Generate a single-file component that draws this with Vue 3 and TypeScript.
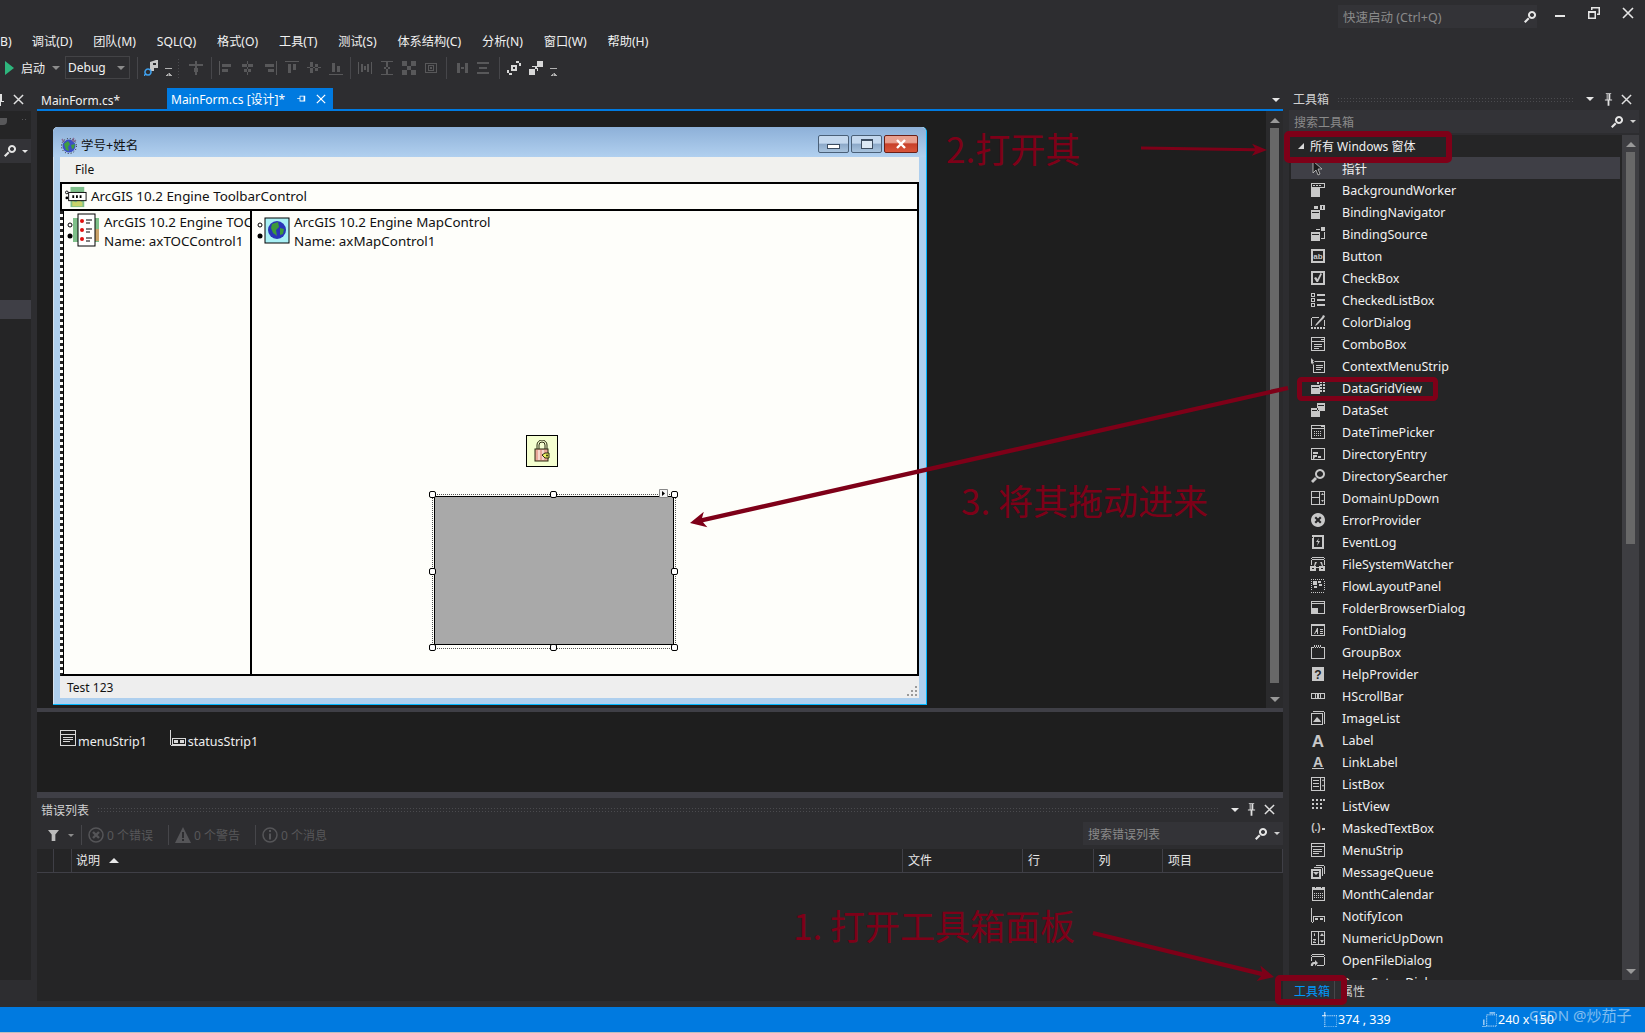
<script setup lang="ts">
// Visual Studio designer view with a Windows Form, toolbox and error list
interface ToolItem {
  name: string;
  d?: string;
  glyph?: string;
  gx?: number;
  gy?: number;
  gs?: number;
}

const r = (x: number, y: number, w: number, h: number): string => `M${x} ${y}h${w}v${h}h${-w}z`;
const frame = (x: number, y: number, w: number, h: number, t = 1): string =>
  r(x, y, w, h) + r(x + t, y + t, w - 2 * t, h - 2 * t);
const cyl = (x: number, y: number): string => r(x, y, 9, 9) + r(x + 1, y + 2, 7, 1);
const dots = (x: number, y: number, cols: number, rows: number, w = 2, h = 2, g = 1): string => {
  let out = "";
  for (let i = 0; i < cols; i++) {
    for (let j = 0; j < rows; j++) out += r(x + i * (w + g), y + j * (h + g), w, h);
  }
  return out;
};

const menuItems = ["调试(D)", "团队(M)", "SQL(Q)", "格式(O)", "工具(T)", "测试(S)", "体系结构(C)", "分析(N)", "窗口(W)", "帮助(H)"];

const alignIcons: string[][] = [
  [
    r(0, 0, 1, 14) + r(3, 3, 9, 3) + r(3, 8, 6, 3),
    r(6, 0, 1, 14) + r(1, 3, 11, 3) + r(3, 8, 7, 3) ,
    r(13, 0, 1, 14) + r(2, 3, 9, 3) + r(5, 8, 6, 3),
    r(0, 0, 14, 1) + r(3, 3, 3, 9) + r(8, 3, 3, 6),
    r(0, 6, 14, 1) + r(3, 1, 3, 11) + r(8, 3, 3, 7),
    r(0, 13, 14, 1) + r(3, 2, 3, 9) + r(8, 5, 3, 6),
  ],
  [
    r(0, 1, 1, 12) + r(13, 1, 1, 12) + r(3, 3, 2, 8) + r(9, 3, 2, 8) + r(6, 5, 2, 4),
    r(1, 0, 12, 1) + r(1, 13, 12, 1) + r(6, 1, 2, 12) + r(4, 6, 6, 2),
    r(0, 0, 5, 5) + r(9, 0, 5, 5) + r(0, 9, 5, 5) + r(9, 9, 5, 5) + r(5, 5, 4, 4),
    frame(1, 2, 12, 10) + frame(4, 4, 6, 6, 1) + r(6, 6, 2, 2),
  ],
  [
    r(1, 2, 3, 10) + r(9, 2, 3, 10) + r(5, 6, 3, 2),
    r(1, 1, 12, 2) + r(1, 11, 12, 2) + r(3, 6, 8, 2),
  ],
  [
    r(0, 9, 2, 5) + r(0, 12, 5, 2) + r(12, 0, 2, 5) + r(9, 0, 5, 2) + frame(4, 4, 6, 6, 2),
    r(0, 8, 6, 6) + r(8, 0, 6, 6) + r(6, 6, 2, 2) + r(3, 5, 5, 1) + r(8, 7, 1, 3),
  ],
];

const tools: ToolItem[] = [
  { name: "BackgroundWorker", d: frame(1, 1, 14, 5) + dots(3, 3, 3, 1, 2, 1, 1) + r(1, 6, 9, 9) },
  { name: "BindingNavigator", d: cyl(1, 6) + r(4, 2, 4, 3) + r(10, 1, 5, 5) + r(12, 2, 1, 3) },
  { name: "BindingSource", d: cyl(1, 6) + r(11, 1, 4, 4) + r(6, 3, 4, 1) + r(14, 6, 1, 7) + r(11, 12, 3, 1) },
  { name: "Button", d: frame(1, 1, 14, 14, 2), glyph: "ab", gx: 8, gy: 11, gs: 8 },
  { name: "CheckBox", d: frame(1, 1, 14, 14, 2) + "M4 8l2-1 1.5 2 3-6 1.5 1-4 8h-1.5z" },
  { name: "CheckedListBox", d: frame(1, 1, 4, 4) + frame(1, 6, 4, 4) + frame(1, 11, 4, 4) + r(7, 2, 8, 2) + r(7, 7, 8, 2) + r(7, 12, 8, 2) },
  { name: "ColorDialog", d: r(1, 3, 8, 1) + r(1, 3, 1, 9) + r(14, 6, 1, 6) + dots(1, 13, 5, 1, 2, 2, 1) + "M6 10l6-7 1-2 2 1-1 2-7 7-2 1z" },
  { name: "ComboBox", d: frame(1, 1, 14, 14) + r(2, 5, 12, 1) + r(4, 8, 8, 1) + r(4, 10, 8, 1) + r(4, 12, 5, 1) + r(11, 3, 3, 1) },
  { name: "ContextMenuStrip", d: frame(3, 3, 12, 12) + r(6, 7, 7, 1) + r(6, 9, 7, 1) + r(6, 11, 5, 1) + "M1 0l4 4h-2l1 2-1 1-1-2-1 1z" },
  { name: "DataGridView", d: cyl(1, 5) + dots(10, 1, 2, 4, 2, 2, 1) + r(7, 1, 2, 3) },
  { name: "DataSet", d: cyl(1, 6) + r(7, 1, 8, 8) + r(8, 3, 6, 1) + r(8, 6, 2, 3) },
  { name: "DateTimePicker", d: frame(1, 1, 14, 14) + r(2, 4, 12, 1) + r(11, 2, 3, 1) + dots(4, 7, 4, 3, 1, 1, 1) },
  { name: "DirectoryEntry", d: frame(1, 2, 14, 12) + r(3, 6, 5, 2) + "M3 9h4v2h-2l-1 2h-1z" + r(8, 10, 3, 2) },
  { name: "DirectorySearcher", d: "M10 1a5 5 0 1 1-.01 0zM10 3a3 3 0 1 0 .01 0z" + "M5 9l2 2-4 4-2-2z" },
  { name: "DomainUpDown", d: frame(1, 1, 14, 14) + r(2, 7, 7, 1) + r(9, 2, 1, 12) + "M11 5l1.5-2 1.5 2zM11 10h3l-1.5 2z" },
  { name: "ErrorProvider", d: "M8 1a7 7 0 1 1-.01 0z" + "M4.5 6l1.5-1.5 2 2 2-2 1.500 1.500-2 2 2 2-1.500 1.500-2-2-2 2-1.500-1.500 2-2z" },
  { name: "EventLog", d: frame(2, 1, 12, 14, 2) + r(2, 3, 1, 1) + "M9 4l-3 4h2l-1 4 3-5h-2z" },
  { name: "FileSystemWatcher", d: r(1, 1, 14, 1) + r(1, 1, 1, 8) + r(14, 1, 1, 8) + r(1, 3, 14, 1) + "M5 6h2l-2 4h-1zM10 6h2l1 4h-1z" + frame(0, 10, 6, 5, 2) + frame(9, 10, 6, 5, 2) + r(6, 11, 3, 1) },
  { name: "FlowLayoutPanel", d: dots(1, 1, 7, 1, 1, 1, 1) + dots(1, 14, 7, 1, 1, 1, 1) + dots(1, 3, 1, 5, 1, 1, 1) + dots(14, 3, 1, 5, 1, 1, 1) + r(3, 3, 4, 4) + r(8, 3, 3, 2) + r(4, 8, 3, 2) + r(9, 6, 3, 2) },
  { name: "FolderBrowserDialog", d: frame(1, 1, 14, 13) + r(2, 8, 6, 5) + r(2, 3, 12, 1) },
  { name: "FontDialog", d: frame(1, 2, 14, 12) + r(2, 3, 12, 1) + "M4 12l3-6h1v6h-1v-2h-1l-1 2z" + r(10, 7, 3, 1) + r(10, 9, 3, 1) + r(10, 11, 3, 1) },
  { name: "GroupBox", d: frame(1, 3, 14, 12) + r(4, 1, 1, 3) + r(6, 1, 1, 3) + r(8, 1, 1, 3) + r(10, 1, 1, 3) },
  { name: "HelpProvider", d: r(2, 1, 12, 14), glyph: "?", gx: 8, gy: 12.5, gs: 12 },
  { name: "HScrollBar", d: r(1, 5, 14, 6) + r(2, 6, 3, 4) + r(6, 6, 4, 4) + r(11, 6, 3, 4) + r(7, 6, 2, 4) },
  { name: "ImageList", d: frame(1, 3, 12, 12) + r(14, 1, 1, 13) + r(3, 1, 12, 1) + "M3 12l4-5 3 3 1 2z" },
  { name: "Label", glyph: "A", gx: 8, gy: 15, gs: 17 },
  { name: "LinkLabel", d: r(2, 14, 12, 1), glyph: "A", gx: 8, gy: 13, gs: 14 },
  { name: "ListBox", d: frame(1, 1, 14, 14) + r(3, 4, 6, 1) + r(3, 7, 6, 1) + r(3, 10, 6, 1) + r(10, 2, 1, 12) + "M12 5l1-2 1 2zM12 9h2l-1 2z" },
  { name: "ListView", d: dots(2, 1, 3, 3, 2, 2, 2) + r(13, 1, 2, 2) },
  { name: "MaskedTextBox", d: r(12, 8, 3, 2), glyph: "(.)", gx: 6, gy: 11, gs: 10 },
  { name: "MenuStrip", d: frame(1, 1, 14, 14) + r(2, 4, 12, 1) + r(3, 7, 9, 1) + r(3, 9, 9, 1) + r(3, 11, 6, 1) },
  { name: "MessageQueue", d: frame(1, 5, 10, 10, 2) + "M3 8h6l-3 3z" + r(4, 3, 9, 1) + r(12, 3, 1, 9) + r(6, 1, 9, 1) + r(14, 1, 1, 9) },
  { name: "MonthCalendar", d: frame(2, 1, 13, 14) + r(3, 2, 11, 2) + r(5, 1, 1, 1) + r(11, 1, 1, 1) + dots(4, 7, 5, 3, 1, 1, 1) },
  { name: "NotifyIcon", d: r(1, 0, 1, 15) + r(1, 14, 14, 1) + frame(3, 8, 12, 7, 1) + r(5, 10, 3, 2) + r(10, 10, 3, 2) },
  { name: "NumericUpDown", d: frame(1, 1, 14, 14) + r(8, 2, 1, 12) + "M5 3v3h-1v-2l-1 .500zM3 9h3v1l-2 2h2v1h-3v-1l2-2h-2z" + "M10 6l2-3 2 3zM10 10h4l-2 3z" },
  { name: "OpenFileDialog", d: r(1, 2, 14, 1) + r(1, 4, 14, 1) + r(14, 2, 1, 12) + r(7, 13, 8, 1) + r(1, 2, 1, 7) + "M1 14a3 3 0 0 1 3-4h1v-2l3 3-3 3v-2h-1a2 2 0 0 0-1 2z" },
  { name: "PageSetupDialog", d: frame(2, 1, 12, 14) },
];

const arrow = (x1: number, y1: number, x2: number, y2: number, t: number, len: number, wid: number): string => {
  const dist = Math.hypot(x2 - x1, y2 - y1);
  const ux = (x2 - x1) / dist;
  const uy = (y2 - y1) / dist;
  const nx = -uy;
  const ny = ux;
  const pt = (a: number, b: number): string => `${(x2 + ux * a + nx * b).toFixed(1)} ${(y2 + uy * a + ny * b).toFixed(1)}`;
  return `M${(x1 + nx * t).toFixed(1)} ${(y1 + ny * t).toFixed(1)}L${pt(-len * 0.8, t)}L${pt(-len, wid)}L${pt(0, 0)}L${pt(-len, -wid)}L${pt(-len * 0.8, -t)}L${(x1 - nx * t).toFixed(1)} ${(y1 - ny * t).toFixed(1)}z`;
};

const arrows = [
  arrow(1141, 148, 1267, 150, 1.5, 15, 6),
  arrow(1288, 388, 690, 523, 2.2, 16, 8),
  arrow(1093, 933, 1274, 977, 2.2, 16, 8),
];

const handles: number[][] = [];
for (const y of [0, 50, 100]) {
  for (const x of [0, 50, 100]) {
    if (!(x === 50 && y === 50)) handles.push([x, y]);
  }
}

const columns = [
  { label: "文件", w: 120 },
  { label: "行", w: 70.5 },
  { label: "列", w: 69.5 },
  { label: "项目", w: 120 },
];
</script>

<template>
  <div class="ide">
    <header class="chrome">
      <div class="title-row">
        <div class="quick">
          <span>快速启动 (Ctrl+Q)</span>
          <svg class="mag" viewBox="0 0 14 14"><path d="M9 1a4 4 0 1 1-.01 0zM9 3a2 2 0 1 0 .01 0zM5 7.500l1.500 1.500-4 4-1.500-1.500z" fill-rule="evenodd" /></svg>
        </div>
        <div class="win-btns">
          <svg viewBox="0 0 14 14"><path d="M2 9h10v2h-10z" /></svg>
          <svg viewBox="0 0 14 14"><path d="M1 5h8v8h-8zM2.500 7v4.500h5v-4.500zM4 1h9v8h-3v-1.500h1.500v-5h-6v1.500h-1.500z" fill-rule="evenodd" /></svg>
          <svg viewBox="0 0 14 14"><path d="M2 2l10 10M12 2l-10 10" stroke="#e6e6e6" stroke-width="1.600" /></svg>
        </div>
      </div>
      <nav class="menu">
        <span class="menu-cut">B)</span>
        <span v-for="m in menuItems" :key="m">{{ m }}</span>
      </nav>
      <div class="toolbar">
        <svg class="play" viewBox="0 0 9 14"><path d="M0 0l9 7-9 7z" /></svg>
        <span class="start">启动</span>
        <i class="caret start-caret"></i>
        <div class="combo">Debug<i class="caret"></i></div>
        <i class="sep sep-a"></i>
        <svg class="conn" viewBox="0 0 14 16">
          <path d="M6 2l6-2h2v8h-4v3h-4z" fill="#c8c8c8" />
          <path d="M9 3h3v2h-3z" fill="#2d2d30" />
          <path d="M4 9a3 3 0 1 1-.01 0zM2 13l-2 3" fill="none" stroke="#3fa2f0" stroke-width="1.500" />
        </svg>
        <i class="overflow"></i>
        <i class="dots"></i>
        <svg class="ticon solo" viewBox="0 0 14 14"><path :d="r(0, 3, 14, 2) + r(6, 0, 2, 14) + r(5, 7, 4, 4)" /></svg>
        <template v-for="(group, i) in alignIcons" :key="i">
          <i class="sep" :class="'sep-' + i"></i>
          <div class="tgroup" :class="'tgroup-' + i">
            <svg v-for="d in group" :key="d" class="ticon" viewBox="0 0 14 14"><path :d="d" fill-rule="evenodd" /></svg>
          </div>
        </template>
        <i class="overflow last"></i>
      </div>
    </header>

    <div class="body">
      <aside class="left">
        <div class="left-head">
          <svg class="left-pin" viewBox="0 0 6 14"><path d="M0 1h4v7h2v1h-3v4h-1v-4h-2z" /></svg>
          <svg class="left-x" viewBox="0 0 12 12"><path d="M1 1l10 10M11 1l-10 10" stroke="#e0e0e0" stroke-width="1.600" /></svg>
        </div>
        <div class="left-pane">
          <div class="left-tools"><i></i><b></b></div>
          <div class="left-search">
            <svg class="mag" viewBox="0 0 14 14"><path d="M9 1a4 4 0 1 1-.01 0zM9 3a2 2 0 1 0 .01 0zM5 7.500l1.500 1.500-4 4-1.500-1.500z" fill-rule="evenodd" /></svg>
            <i class="caret small"></i>
          </div>
          <div class="left-sel"></div>
        </div>
      </aside>

      <main class="center">
        <div class="tabs">
          <div class="tab">MainForm.cs*</div>
          <div class="tab active">
            <span>MainForm.cs [设计]*</span>
            <svg class="tab-pin" viewBox="0 0 12 10"><path d="M0 4h3v-3h7v7h-7v-3h-3zM4 2v5h4v-5z" fill-rule="evenodd" /></svg>
            <svg class="tab-x" viewBox="0 0 12 12"><path d="M1 1l10 10M11 1l-10 10" stroke="#fff" stroke-width="1.500" /></svg>
          </div>
          <i class="caret well-caret"></i>
        </div>

        <section class="designer">
          <div class="canvas">
            <div class="form">
              <div class="form-title">
                <svg class="form-ico" viewBox="0 0 18 18">
                  <circle cx="9" cy="10" r="6.500" fill="#3c4fc4" />
                  <path d="M4 8l4-3 2 3-2 3 1 4-3-1zM11 9l4-1-1 4-2 1z" fill="#3f9e3f" />
                  <path d="M2 3l2 3M14 2l-2 3M16 4l-3 2" stroke="#8a6d9a" stroke-width="1.500" />
                  <circle cx="9" cy="10" r="7.500" fill="none" stroke="#222" stroke-dasharray="1 2" />
                </svg>
                <span>学号+姓名</span>
                <div class="form-btns">
                  <div class="fb"><i class="fb-min"></i></div>
                  <div class="fb"><i class="fb-max"></i></div>
                  <div class="fb fb-close">
                    <svg viewBox="0 0 12 10"><path d="M2 1l8 8M10 1l-8 8" stroke="#fff" stroke-width="2.400" /></svg>
                  </div>
                </div>
              </div>
              <div class="client">
                <div class="form-menu">File</div>
                <div class="ctl-toolbar">
                  <svg class="ax-ico" viewBox="0 0 24 24">
                    <rect x="6" y="1" width="15" height="22" fill="#7fc08a" />
                    <path d="M8 16l4 2 3-3 4 3v4h-11z" fill="#c9d36a" />
                    <rect x="4" y="7" width="19" height="9" fill="#fff" stroke="#000" />
                    <path d="M8 10h2v3h-2zM12 10h2v3h-2zM16 10h2v3h-2z" fill="#000" />
                    <circle cx="2" cy="7" r="1.500" fill="#fff" stroke="#000" />
                    <circle cx="2" cy="13" r="1.500" fill="#000" />
                  </svg>
                  <span>ArcGIS 10.2 Engine ToolbarControl</span>
                </div>
                <div class="surface">
                  <div class="toc">
                    <svg class="ax-ico big" viewBox="0 0 34 34">
                      <rect x="7" y="5" width="26" height="24" fill="#7fc08a" />
                      <path d="M22 16h11v12h-11z" fill="#c9a26a" />
                      <rect x="12" y="1" width="17" height="32" fill="#fff" stroke="#000" />
                      <circle cx="16" cy="8" r="2" fill="#e01010" />
                      <circle cx="16" cy="17" r="2" fill="#e01010" />
                      <circle cx="16" cy="26" r="2" fill="#e01010" />
                      <path d="M20 7h6M20 10h4M20 16h6M20 19h4M20 25h6M20 28h4" stroke="#000" />
                      <circle cx="4" cy="12" r="2" fill="#fff" stroke="#000" />
                      <circle cx="4" cy="23" r="2.500" fill="#000" />
                    </svg>
                    <div class="ctl-text">
                      <div>ArcGIS 10.2 Engine TOCControl</div>
                      <div>Name: axTOCControl1</div>
                    </div>
                  </div>
                  <div class="map">
                    <svg class="ax-ico big" viewBox="0 0 34 34">
                      <rect x="9" y="5" width="24" height="25" fill="#a9f0f5" stroke="#000" />
                      <circle cx="21" cy="17" r="9" fill="#2a35b8" />
                      <path d="M16 11l6-2 1 5-3 3 1 6-4-3-2-5zM24 15l4 1-1 5-3 1z" fill="#3d9a3a" />
                      <circle cx="4" cy="12" r="2" fill="#fff" stroke="#000" />
                      <circle cx="4" cy="23" r="2.500" fill="#000" />
                    </svg>
                    <div class="ctl-text">
                      <div>ArcGIS 10.2 Engine MapControl</div>
                      <div>Name: axMapControl1</div>
                    </div>
                  </div>
                  <div class="lock">
                    <svg viewBox="0 0 16 22">
                      <path d="M3 9v-4a5 5 0 0 1 10 0v4M5 9v-4a3 3 0 0 1 6 0v4" fill="none" stroke="#2b2b10" />
                      <rect x="1" y="9" width="13" height="12" fill="#e8a89a" stroke="#2b2b10" />
                      <path d="M4 10h2v10h-2zM8 10h2v10h-2z" fill="#f6d6cc" />
                      <path d="M8 15l3-2h4v5h-4z" fill="#e9ee60" stroke="#2b2b10" />
                      <circle cx="13" cy="15.500" r="1" fill="#2b2b10" />
                    </svg>
                  </div>
                  <div class="dgv">
                    <div class="dgv-fill"></div>
                    <i v-for="h in handles" :key="h.join()" class="handle" :style="{ left: h[0] + '%', top: h[1] + '%' }"></i>
                    <svg class="smart" viewBox="0 0 9 9"><path d="M.5.5h8v8h-8z" fill="#f4f4f4" stroke="#888" /><path d="M3 2l3 2.500-3 2.500z" fill="#000" /></svg>
                  </div>
                </div>
                <div class="form-status">
                  <span>Test 123</span>
                  <svg class="grip" viewBox="0 0 10 10"><path d="M8 0h2v2h-2zM4 4h2v2h-2zM8 4h2v2h-2zM0 8h2v2h-2zM4 8h2v2h-2zM8 8h2v2h-2z" fill="#9a9a9a" /></svg>
                </div>
              </div>
            </div>
          </div>
          <div class="vscroll">
            <i class="arr up"></i>
            <div class="thumb"></div>
            <i class="arr down"></i>
          </div>
        </section>

        <div class="splitter"></div>

        <section class="tray">
          <div class="tray-item">
            <svg viewBox="0 0 16 16"><path :d="frame(0, 0, 16, 16) + r(1, 4, 14, 1) + r(3, 7, 10, 1) + r(3, 9, 10, 1) + r(3, 11, 7, 1)" fill-rule="evenodd" /></svg>
            <span>menuStrip1</span>
          </div>
          <div class="tray-item">
            <svg viewBox="0 0 16 16"><path :d="r(0, 0, 1, 16) + r(0, 15, 16, 1) + frame(2, 8, 14, 7) + r(4, 10, 4, 3) + r(10, 10, 4, 3)" fill-rule="evenodd" /></svg>
            <span>statusStrip1</span>
          </div>
        </section>

        <div class="splitter wide"></div>

        <section class="errors">
          <div class="panel-head">
            <span>错误列表</span>
            <i class="gripper"></i>
            <i class="caret"></i>
            <svg class="pin" viewBox="0 0 10 14"><path d="M2 0h6v1h-1v6h2v1h-3v6h-2v-6h-3v-1h2v-6h-1zM4 1v6h1v-6z" fill-rule="evenodd" /></svg>
            <svg class="close" viewBox="0 0 12 12"><path d="M1 1l10 10M11 1l-10 10" stroke="#e0e0e0" stroke-width="1.600" /></svg>
          </div>
          <div class="err-tools">
            <svg class="funnel" viewBox="0 0 12 12"><path d="M0 0h12l-4 5v7h-4v-7z" /></svg>
            <i class="caret small"></i>
            <i class="ebar"></i>
            <div class="ebtn">
              <svg viewBox="0 0 16 16"><circle cx="8" cy="8" r="7" fill="none" stroke="#555558" stroke-width="1.500" /><path d="M5 5l6 6M11 5l-6 6" stroke="#555558" stroke-width="2.400" /></svg>
              <span>0 个错误</span>
            </div>
            <i class="ebar"></i>
            <div class="ebtn">
              <svg viewBox="0 0 16 16"><path d="M8 0l8 16h-16zM7 5v6h2v-6zM7 12v2h2v-2z" fill="#555558" fill-rule="evenodd" /></svg>
              <span>0 个警告</span>
            </div>
            <i class="ebar"></i>
            <div class="ebtn">
              <svg viewBox="0 0 16 16"><circle cx="8" cy="8" r="7" fill="none" stroke="#555558" stroke-width="1.500" /><path d="M7 3h2v2h-2zM7 6.500h2v6h-2z" fill="#555558" /></svg>
              <span>0 个消息</span>
            </div>
            <div class="err-search">
              <span>搜索错误列表</span>
              <svg class="mag" viewBox="0 0 14 14"><path d="M9 1a4 4 0 1 1-.01 0zM9 3a2 2 0 1 0 .01 0zM5 7.500l1.500 1.500-4 4-1.500-1.500z" fill-rule="evenodd" /></svg>
              <i class="caret small"></i>
            </div>
          </div>
          <div class="grid-head">
            <div class="gh gh-a"></div>
            <div class="gh gh-b"></div>
            <div class="gh gh-desc">说明<i class="sort"></i></div>
            <div v-for="c in columns" :key="c.label" class="gh" :style="{ width: c.w + 'px' }">{{ c.label }}</div>
          </div>
          <div class="grid-body"></div>
        </section>
      </main>

      <aside class="toolbox">
        <div class="panel-head tb-head">
          <span>工具箱</span>
          <i class="gripper"></i>
          <i class="caret"></i>
          <svg class="pin" viewBox="0 0 10 14"><path d="M2 0h6v1h-1v6h2v1h-3v6h-2v-6h-3v-1h2v-6h-1zM4 1v6h1v-6z" fill-rule="evenodd" /></svg>
          <svg class="close" viewBox="0 0 12 12"><path d="M1 1l10 10M11 1l-10 10" stroke="#e0e0e0" stroke-width="1.600" /></svg>
        </div>
        <div class="tb-search">
          <span>搜索工具箱</span>
          <svg class="mag" viewBox="0 0 14 14"><path d="M9 1a4 4 0 1 1-.01 0zM9 3a2 2 0 1 0 .01 0zM5 7.500l1.500 1.500-4 4-1.500-1.500z" fill-rule="evenodd" /></svg>
          <i class="caret small"></i>
        </div>
        <div class="tb-list">
          <div class="tb-rows">
            <div class="tb-group"><i class="tri"></i>所有 Windows 窗体</div>
            <div class="tb-row selected">
              <svg class="tool" viewBox="0 0 16 16"><path d="M3 1l9 8h-4l2 5-2 1-2-5-3 3z" fill="#1b1b1c" stroke="#c8c8c8" stroke-width=".8" /></svg>
              <span>指针</span>
            </div>
            <div v-for="t in tools" :key="t.name" class="tb-row">
              <svg class="tool" viewBox="0 0 16 16">
                <path v-if="t.d" :d="t.d" fill-rule="evenodd" />
                <text v-if="t.glyph" :x="t.gx" :y="t.gy" :font-size="t.gs" :class="{ onfill: t.name === 'HelpProvider' }">{{ t.glyph }}</text>
              </svg>
              <span>{{ t.name }}</span>
            </div>
          </div>
          <div class="vscroll tb-scroll">
            <i class="arr up"></i>
            <div class="thumb"></div>
            <i class="arr down"></i>
          </div>
        </div>
        <div class="tb-tabs">
          <span class="on">工具箱</span>
          <i></i>
          <span>属性</span>
        </div>
      </aside>
    </div>

    <footer class="status">
      <div class="st-pos">
        <svg viewBox="0 0 16 16"><path d="M3 4h13v12h-13z" fill="none" stroke="#fff" stroke-dasharray="1 1" /><path d="M0 4h4M3 0v4" stroke="#fff" /></svg>
        <span>374 , 339</span>
      </div>
      <div class="st-size">
        <svg viewBox="0 0 16 16"><path d="M5 3h11v12h-11z" fill="none" stroke="#fff" stroke-dasharray="1 1" /><path d="M0 16h5M2 8v6M8 1h6" stroke="#fff" /></svg>
        <span>240 x 150</span>
      </div>
    </footer>

    <svg class="notes" viewBox="0 0 1645 1033">
      <rect x="1287" y="134" width="162" height="26" rx="2" class="note-box" stroke-width="6" />
      <rect x="1299.500" y="379.500" width="136" height="19" rx="2" class="note-box" stroke-width="5" />
      <rect x="1278" y="978" width="66" height="24" rx="2" class="note-box" stroke-width="6" />
      <path v-for="d in arrows" :key="d" :d="d" class="note-fill" />
      <text x="946" y="163" class="note-text">2.打开其</text>
      <text x="961" y="515" class="note-text">3. 将其拖动进来</text>
      <text x="793" y="940" class="note-text">1. 打开工具箱面板</text>
      <text x="1529" y="1021" class="mark">CSDN @炒茄子</text>
    </svg>
  </div>
</template>

<style scoped>
.ide {
  position: relative;
  width: 1645px;
  height: 1033px;
  overflow: hidden;
  display: flex;
  flex-direction: column;
  background: #2d2d30;
  color: #f1f1f1;
  font-family: "Noto Sans", "Noto Sans CJK SC", sans-serif;
  font-size: 12px;
}
i { display: block; font-style: normal; }

.caret {
  width: 0;
  height: 0;
  border-left: 4px solid transparent;
  border-right: 4px solid transparent;
  border-top: 4px solid #e6e6e6;
}
.caret.small { border-left-width: 3px; border-right-width: 3px; border-top-width: 3px; }
.mag { width: 14px; height: 14px; fill: #e6e6e6; flex: none; }
.gripper {
  flex: 1;
  height: 5px;
  background-image: radial-gradient(#4a4a4e 0.8px, transparent 0.9px);
  background-size: 3px 3px;
}

/* top chrome */
.chrome { height: 88px; flex: none; }
.title-row { height: 29px; display: flex; justify-content: flex-end; align-items: flex-start; }
.quick {
  width: 199px;
  height: 23px;
  margin-top: 5px;
  background: #333337;
  color: #8a8a8a;
  display: flex;
  align-items: center;
  justify-content: space-between;
  padding: 0 0 0 5px;
  box-sizing: border-box;
  font-size: 12.500px;
}
.win-btns { display: flex; gap: 20px; padding: 6px 10px 0 16px; }
.win-btns svg { width: 14px; height: 14px; fill: #e6e6e6; }
.menu { height: 24px; display: flex; align-items: center; gap: 20.800px; font-size: 12.200px; }
.menu-cut { width: 11px; margin-right: 0; }
.toolbar { height: 29px; display: flex; align-items: center; position: relative; }
.play { width: 9px; height: 14px; fill: #2eb67d; margin-left: 5px; }
.start { margin-left: 7px; font-size: 12px; width: 26px; }
.start-caret { margin-left: 5px; border-top-color: #8c8c8c; }
.combo {
  width: 65px;
  height: 23px;
  box-sizing: border-box;
  margin-left: 5px;
  border: 1px solid #434346;
  background: #2d2d30;
  padding-left: 2px;
  display: flex;
  align-items: center;
  justify-content: space-between;
  padding-right: 4px;
}
.combo .caret { border-top-color: #8c8c8c; }
.sep { width: 1px; height: 22px; background: #46464a; }
.sep-a { margin-left: 7px; }
.conn { width: 14px; height: 16px; margin-left: 6px; }
.overflow {
  width: 7px;
  height: 7px;
  margin: 9px 0 0 7px;
  border-top: 1px solid #b0b0b0;
  background: linear-gradient(135deg, transparent 48%, #b0b0b0 50%) 0 2px / 50% 100% no-repeat,
    linear-gradient(225deg, transparent 48%, #b0b0b0 50%) 100% 2px / 50% 100% no-repeat;
}
.overflow.last { margin-left: 7px; }
.dots {
  width: 4px;
  height: 20px;
  margin-left: 5px;
  background-image: radial-gradient(#4a4a4e 0.8px, transparent 0.9px);
  background-size: 3px 3px;
}
.ticon { width: 14px; height: 14px; fill: #58585a; flex: none; }
.solo { margin: 0 8px 0 8px; }
.tgroup { display: flex; gap: 8px; margin: 0 7px 0 7px; }
.tgroup-1 { margin-right: 8px; }
.tgroup-2 { gap: 6px; margin-left: 9px; margin-right: 9px; }
.tgroup-3 { margin-left: 7px; margin-right: 0; }
.tgroup-3 .ticon { fill: #d8d8d8; }

/* layout */
.body { flex: 1; display: flex; min-height: 0; }
.left { width: 37px; flex: none; display: flex; flex-direction: column; }
.left-head { height: 23px; position: relative; display: flex; align-items: center; gap: 7px; }
.left-pin { width: 6px; height: 14px; fill: #e0e0e0; margin-left: -2px; }
.left-x { width: 11px; height: 11px; margin-left: 2px; }
.left-pane { width: 31px; height: 869px; background: #252526; }
.left-tools { height: 27px; display: flex; justify-content: space-between; padding: 7px 4px 0 0; box-sizing: border-box; }
.left-tools i { width: 7px; height: 7px; border-radius: 0 0 4px 0; background: #58585a; }
.left-tools b { width: 6px; height: 4px; background-image: radial-gradient(#58585a 1px, transparent 1px); background-size: 3px 3px; }
.left-search { height: 24px; background: #333337; margin-top: 1px; display: flex; align-items: center; gap: 5px; padding-left: 3px; }
.left-sel { height: 19px; background: #3f3f46; margin-top: 137px; }

.center { width: 1246px; flex: none; display: flex; flex-direction: column; }
.tabs { height: 21px; flex: none; display: flex; border-bottom: 2px solid #007ae0; position: relative; align-items: stretch; }
.tab { width: 130px; padding-left: 4px; line-height: 25px; box-sizing: border-box; font-size: 12px; }
.tab.active {
  width: 166px;
  background: #007ae0;
  color: #fff;
  display: flex;
  align-items: center;
  padding-left: 4px;
}
.tab.active span { width: 125px; flex: none; margin-top: 2px; line-height: 20px; }
.tab-pin { width: 10px; height: 8px; fill: #fff; margin-left: 1px; }
.tab-x { width: 10px; height: 10px; margin-left: 9px; }
.well-caret { position: absolute; right: 3px; top: 10px; }

.designer { height: 597px; flex: none; display: flex; background: #1e1e1e; }
.canvas { flex: 1; padding: 16px 0 0 16px; }
.vscroll { width: 17px; background: #3e3e42; flex: none; display: flex; flex-direction: column; align-items: center; position: relative; }
.designer .vscroll { background: #2a2a2c; }
.thumb { width: 9px; background: #686868; }
.designer .thumb { height: 555px; margin-top: 17px; }
.arr { width: 0; height: 0; border-left: 5px solid transparent; border-right: 5px solid transparent; position: absolute; left: 3.500px; }
.arr.up { border-bottom: 5px solid #999; top: 7px; }
.arr.down { border-top: 5px solid #999; bottom: 6px; }

/* the form */
.form {
  width: 874px;
  height: 578px;
  box-sizing: border-box;
  background: #aecfee;
  border-right: 1px solid #00b7ff;
  border-bottom: 1px solid #00b7ff;
  border-radius: 5px 5px 0 0;
  box-shadow: inset 0 1px 0 #e8f0f8, inset 1px 0 0 #d6e2ee;
  font-family: "Noto Sans", "Noto Sans CJK SC", sans-serif;
  color: #111;
  display: flex;
  flex-direction: column;
  padding: 0 7px 6px 7px;
}
.form-title {
  height: 30px;
  flex: none;
  margin: 0 -7px;
  padding: 0 8px 0 7px;
  background: linear-gradient(#8db0d8, #b1d0ef);
  display: flex;
  align-items: center;
  gap: 3px;
  border-radius: 5px 5px 0 0;
  font-size: 12.500px;
}
.form-title > span { margin-top: 4px; }
.form-ico { width: 18px; height: 18px; margin-top: 5px; }
.form-btns { margin-left: auto; display: flex; gap: 2px; align-items: flex-start; height: 30px; padding-top: 8px; box-sizing: border-box; }
.fb {
  width: 31px;
  height: 18px;
  box-sizing: border-box;
  border: 1px solid #4a6078;
  border-radius: 2px;
  background: linear-gradient(#c4d8ee 45%, #8ba8c8 50%, #a9c4de);
  display: flex;
  align-items: center;
  justify-content: center;
}
.fb-close { width: 34px; background: linear-gradient(#e8a090 40%, #c8402a 50%, #d8553a); border-color: #6a2018; }
.fb-close svg { width: 12px; height: 10px; }
.fb-min { width: 11px; height: 3px; margin-top: 5px; background: #fff; border: 1px solid #3c4c60; }
.fb-max { width: 10px; height: 7px; border: 1px solid #3c4c60; border-top-width: 2px; background: #dce8f4; }
.client { flex: 1; display: flex; flex-direction: column; min-height: 0; }
.form-menu { height: 25px; flex: none; background: #f1f1ee; padding-left: 15px; line-height: 25px; font-size: 12px; }
.ctl-toolbar {
  height: 29px;
  flex: none;
  box-sizing: border-box;
  border: 2px solid #000;
  background: #fefefa;
  display: flex;
  align-items: center;
  padding: 0 0 0 3px;
  gap: 4px;
  font-size: 13.400px;
}
.ctl-toolbar span { margin-top: -2px; }
.ax-ico { width: 22px; height: 22px; flex: none; }
.ax-ico.big { width: 34px; height: 34px; }
.surface {
  flex: 1;
  display: flex;
  position: relative;
  box-sizing: border-box;
  background: #fefefa;
  border-bottom: 2px solid #000;
  border-right: 2px solid #000;
  border-left: 3px dotted #222;
}
.toc { width: 189px; flex: none; overflow: hidden; border-left: 1px solid #000; border-right: 2px solid #000; display: flex; padding: 2px 0 0 2px; gap: 4px; white-space: nowrap; box-sizing: border-box; }
.map { flex: 1; display: flex; padding: 2px 0 0 4px; gap: 4px; white-space: nowrap; }
.ctl-text { font-size: 13.400px; line-height: 19px; }
.lock {
  position: absolute;
  left: 463px;
  top: 224px;
  width: 32px;
  height: 32px;
  box-sizing: border-box;
  border: 1px solid #000;
  background: #f5ffd0;
  display: flex;
  align-items: center;
  justify-content: center;
}
.lock svg { width: 16px; height: 22px; }
.dgv {
  position: absolute;
  left: 369px;
  top: 283px;
  width: 244px;
  height: 155px;
  box-sizing: border-box;
  border: 1px dotted #555;
}
.dgv-fill {
  position: absolute;
  left: 1px;
  right: 1px;
  top: 1px;
  bottom: 3px;
  background: #a9a9a9;
  border: 1px solid #000;
}
.handle {
  position: absolute;
  width: 7px;
  height: 7px;
  box-sizing: border-box;
  margin: -4px 0 0 -4px;
  border: 1px solid #000;
  border-radius: 2px;
  background: #fff;
}
.smart {
  position: absolute;
  right: 7px;
  top: -6px;
  width: 9px;
  height: 9px;
}
.form-status {
  height: 22px;
  flex: none;
  background: #eeeeee;
  display: flex;
  align-items: center;
  justify-content: space-between;
  padding: 0 2px 0 7px;
}
.grip { width: 10px; height: 10px; margin-top: 8px; }

.splitter { height: 4px; flex: none; background: #3f3f46; }
.splitter.wide { height: 6px; }
.tray { height: 80px; flex: none; background: #1e1e1e; display: flex; gap: 23px; padding: 18px 0 0 23px; box-sizing: border-box; }
.tray-item { display: flex; gap: 2px; height: 24px; font-size: 12.500px; color: #eee; }
.tray-item svg { width: 16px; height: 16px; fill: #d8d8d8; }
.tray-item span { margin-top: 4px; line-height: 16px; }

/* error list */
.errors { flex: 1; display: flex; flex-direction: column; padding-bottom: 6px; box-sizing: border-box; }
.panel-head { height: 23px; flex: none; display: flex; align-items: center; color: #d0d0d0; padding-left: 4px; gap: 8px; }
.panel-head .caret { margin-left: 3px; }
.pin { width: 9px; height: 13px; fill: #e0e0e0; }
.close { width: 11px; height: 11px; margin-right: 8px; }
.err-tools { height: 28px; flex: none; display: flex; align-items: center; position: relative; }
.funnel { width: 11px; height: 11px; fill: #bcbcbc; margin-left: 11px; }
.err-tools .caret { margin: 0 6px 0 9px; border-top-color: #8c8c8c; }
.ebar { width: 1px; height: 20px; background: #46464a; margin-left: 1px; }
.ebtn { display: flex; align-items: center; gap: 3px; width: 85px; padding-left: 6px; box-sizing: border-box; color: #58585a; }
.ebtn svg { width: 16px; height: 16px; flex: none; }
.err-search {
  position: absolute;
  right: 0;
  top: 1px;
  width: 200px;
  height: 23px;
  background: #333337;
  color: #8a8a8a;
  display: flex;
  align-items: center;
  padding-left: 5px;
  box-sizing: border-box;
}
.err-search span { flex: 1; }
.err-search .caret { margin: 0 3px 0 6px; border-top-color: #d0d0d0; }
.grid-head { height: 24px; flex: none; display: flex; background: #252526; border-bottom: 1px solid #3f3f46; box-sizing: border-box; }
.gh { border-right: 1px solid #3f3f46; box-sizing: border-box; padding-left: 5px; line-height: 23px; color: #e8e8e8; flex: none; }
.gh-a { width: 17px; padding: 0; }
.gh-b { width: 18px; padding: 0; }
.gh-desc { width: 831px; display: flex; align-items: center; padding-left: 4px; }
.sort { width: 0; height: 0; margin-left: 9px; border-left: 5px solid transparent; border-right: 5px solid transparent; border-bottom: 5px solid #e8e8e8; }
.grid-body { flex: 1; background: #252526; }

/* toolbox */
.toolbox { flex: 1; display: flex; flex-direction: column; padding: 0 6px; min-width: 0; }
.tb-head { height: 22px; padding-left: 4px; margin-right: -6px; }
.tb-head .caret { margin-right: 2px; }
.tb-head .close { margin-right: 13px; }
.tb-search {
  height: 23px;
  flex: none;
  background: #333337;
  color: #8a8a8a;
  display: flex;
  align-items: center;
  padding-left: 5px;
}
.tb-search span { flex: 1; }
.tb-search .caret { margin: 0 3px 0 6px; border-top-color: #d0d0d0; }
.tb-list { height: 845px; flex: none; margin-top: 2px; display: flex; background: #252526; overflow: hidden; }
.tb-rows { flex: 1; overflow: hidden; padding-left: 2px; }
.tb-group { height: 22px; display: flex; align-items: center; padding-left: 7px; }
.tri { width: 0; height: 0; border-bottom: 6px solid #d8d8d8; border-left: 6px solid transparent; margin-right: 6px; }
.tb-row { height: 22px; display: flex; align-items: center; color: #f1f1f1; font-size: 12.500px; margin-right: 2px; }
.tb-row.selected { background: #3f3f46; }
.tool { width: 16px; height: 16px; margin: 0 16px 0 19px; flex: none; fill: #c8c8c8; }
.tool text { text-anchor: middle; font-family: "Liberation Sans", sans-serif; font-weight: 700; fill: #c8c8c8; }
.tool text.onfill { fill: #252526; }
.tb-scroll { background: #3e3e42; }
.tb-scroll .thumb { height: 392px; margin-top: 17px; }
.tb-tabs { height: 27px; flex: none; display: flex; align-items: center; padding: 0 0 6px 5px; box-sizing: border-box; color: #d0d0d0; }
.tb-tabs .on { color: #0097fb; }
.tb-tabs i { width: 1px; height: 20px; background: #46464a; margin: 0 6px 0 4px; }

/* status bar */
.status {
  height: 26px;
  flex: none;
  box-sizing: border-box;
  background: #007ae0;
  border-bottom: 1px solid #bdbdbd;
  display: flex;
  align-items: center;
  padding-left: 1322px;
  color: #fff;
  font-size: 12.500px;
}
.st-pos { width: 160px; display: flex; align-items: center; gap: 1px; }
.st-size { display: flex; align-items: center; gap: 1px; }
.status svg { width: 15px; height: 15px; }

/* red notes drawn on the screenshot */
.notes { position: absolute; left: 0; top: 0; width: 1645px; height: 1033px; pointer-events: none; }
.note-box { fill: none; stroke: #7e0018; }
.note-fill { fill: #7e0018; }
.note-text { fill: #7e0018; font-family: "Noto Sans CJK SC", "Noto Sans", sans-serif; font-size: 35px; font-weight: 400; }
.mark { fill: rgba(255, 255, 255, 0.5); font-family: "Noto Sans", "Noto Sans CJK SC", sans-serif; font-size: 15px; }
</style>

<style>
html, body { background: #2d2d30; }
</style>
